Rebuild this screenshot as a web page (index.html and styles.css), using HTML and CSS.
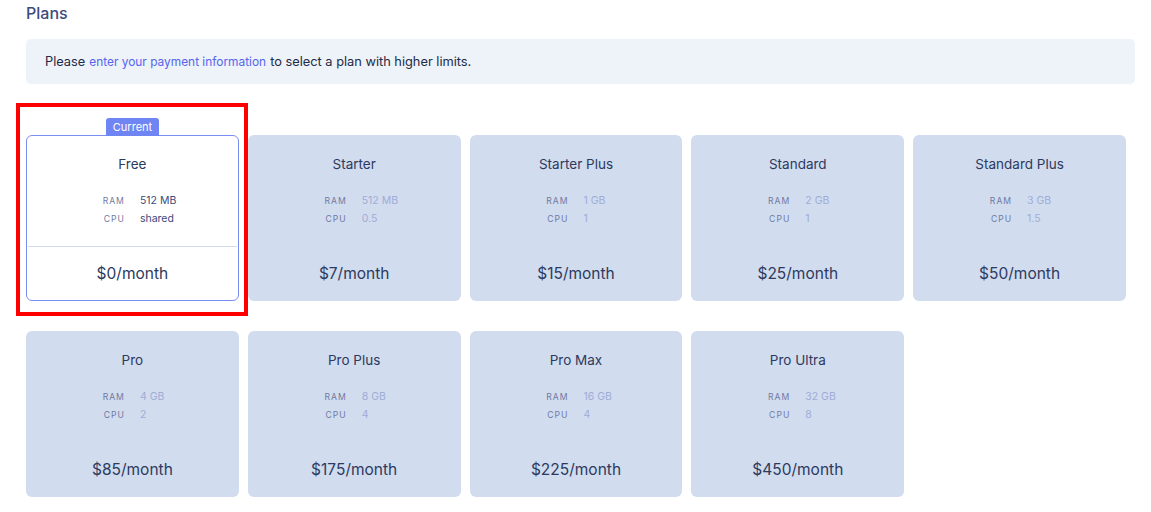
FILE: index.html
```html
<!DOCTYPE html>
<html>
<head>
<meta charset="utf-8">
<link rel="stylesheet" href="styles.css">
</head>
<body>
<div class="page">
  <h2 class="title">Plans</h2>
  <div class="banner">Please <a class="link" href="#">enter your payment information</a> to select a plan with higher limits.</div>
  <div class="grid">
    <div class="cell">
      <div class="card current">
        <div class="badge">Current</div>
        <div class="highlight"></div>
        <div class="top">
          <div class="name">Free</div>
          <div class="specs"><span class="lbl">RAM</span><span class="val">512 MB</span><span class="lbl">CPU</span><span class="val">shared</span></div>
        </div>
        <div class="price">$0/month</div>
      </div>
    </div>
    <div class="cell"><div class="card"><div class="top"><div class="name">Starter</div><div class="specs"><span class="lbl">RAM</span><span class="val">512 MB</span><span class="lbl">CPU</span><span class="val">0.5</span></div></div><div class="price">$7/month</div></div></div>
    <div class="cell"><div class="card"><div class="top"><div class="name">Starter Plus</div><div class="specs"><span class="lbl">RAM</span><span class="val">1 GB</span><span class="lbl">CPU</span><span class="val">1</span></div></div><div class="price">$15/month</div></div></div>
    <div class="cell"><div class="card"><div class="top"><div class="name">Standard</div><div class="specs"><span class="lbl">RAM</span><span class="val">2 GB</span><span class="lbl">CPU</span><span class="val">1</span></div></div><div class="price">$25/month</div></div></div>
    <div class="cell"><div class="card"><div class="top"><div class="name">Standard Plus</div><div class="specs"><span class="lbl">RAM</span><span class="val">3 GB</span><span class="lbl">CPU</span><span class="val">1.5</span></div></div><div class="price">$50/month</div></div></div>
    <div class="cell"><div class="card"><div class="top"><div class="name">Pro</div><div class="specs"><span class="lbl">RAM</span><span class="val">4 GB</span><span class="lbl">CPU</span><span class="val">2</span></div></div><div class="price">$85/month</div></div></div>
    <div class="cell"><div class="card"><div class="top"><div class="name">Pro Plus</div><div class="specs"><span class="lbl">RAM</span><span class="val">8 GB</span><span class="lbl">CPU</span><span class="val">4</span></div></div><div class="price">$175/month</div></div></div>
    <div class="cell"><div class="card"><div class="top"><div class="name">Pro Max</div><div class="specs"><span class="lbl">RAM</span><span class="val">16 GB</span><span class="lbl">CPU</span><span class="val">4</span></div></div><div class="price">$225/month</div></div></div>
    <div class="cell"><div class="card"><div class="top"><div class="name">Pro Ultra</div><div class="specs"><span class="lbl">RAM</span><span class="val">32 GB</span><span class="lbl">CPU</span><span class="val">8</span></div></div><div class="price">$450/month</div></div></div>
  </div>
</div>
</body>
</html>
```
FILE: styles.css
```css
* { box-sizing: border-box; }
html, body { margin: 0; padding: 0; background: #ffffff; }
body { font-family: Inter, "Noto Sans", sans-serif; color: #2a3352; }
.page { padding: 3px 16px 0 26px; }
.title { margin: 0; font-size: 16px; font-weight: 500; line-height: 20px; color: #3c4a7c; }
.banner {
  margin-top: 16px;
  height: 45px;
  background: #eef2f9;
  border-radius: 5px;
  padding: 0 19px;
  display: flex;
  align-items: center;
  font-size: 12.8px;
  color: #222b45;
}
.banner .link { color: #5566ee; text-decoration: none; margin: 0 4px; font-size: 11.9px; }
.grid {
  margin-top: 51px;
  display: grid;
  grid-template-columns: repeat(5, 1fr);
  row-gap: 30px;
}
.cell { padding-right: 9px; }
.card {
  position: relative;
  height: 166px;
  background: #d1dcef;
  border-radius: 6px;
  border: 1px solid transparent;
  display: flex;
  flex-direction: column;
  text-align: center;
}
.card.current { background: #ffffff; border-color: #7a8ef2; }
.top { padding: 19px 0 18px; border-bottom: 1px solid transparent; margin: 0 1px; }
.current .top { border-bottom-color: #d3dcef; }
.name { font-size: 13.5px; line-height: 18px; color: #2d3a5e; }
.specs {
  margin-top: 19px;
  display: grid;
  grid-template-columns: 1fr 1fr;
  column-gap: 15px;
  row-gap: 0;
  line-height: 18px;
}
.lbl { text-align: right; font-size: 8.6px; letter-spacing: 1px; color: #6e7aa2; }
.val { text-align: left; font-size: 10.5px; color: #a0acd6; }
.current .val { color: #3c4a7c; }
.price { padding-top: 15px; font-size: 15.5px; line-height: 24px; color: #2d3a5e; }
.badge {
  position: absolute;
  left: 79px;
  top: -18px;
  width: 53px;
  height: 18px;
  background: #6f85f3;
  color: #ffffff;
  border-radius: 3px 3px 0 0;
  font-size: 11px;
  line-height: 18px;
  text-align: center;
}
.highlight {
  position: absolute;
  left: -11px;
  top: -33px;
  width: 232px;
  height: 213px;
  border: 4px solid #ff0000;
  pointer-events: none;
}
```
